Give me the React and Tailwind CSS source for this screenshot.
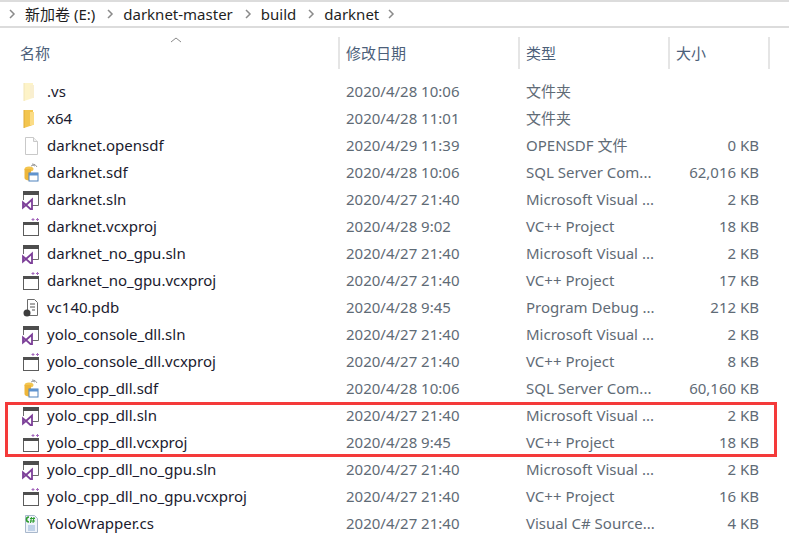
const files = [
  ['.vs', '2020/4/28 10:06', '文件夹', '', 'folderLight'],
  ['x64', '2020/4/28 11:01', '文件夹', '', 'folder'],
  ['darknet.opensdf', '2020/4/29 11:39', 'OPENSDF 文件', '0 KB', 'blank'],
  ['darknet.sdf', '2020/4/28 10:06', 'SQL Server Com...', '62,016 KB', 'sdf'],
  ['darknet.sln', '2020/4/27 21:40', 'Microsoft Visual ...', '2 KB', 'sln'],
  ['darknet.vcxproj', '2020/4/28 9:02', 'VC++ Project', '18 KB', 'proj'],
  ['darknet_no_gpu.sln', '2020/4/27 21:40', 'Microsoft Visual ...', '2 KB', 'sln'],
  ['darknet_no_gpu.vcxproj', '2020/4/27 21:40', 'VC++ Project', '17 KB', 'proj'],
  ['vc140.pdb', '2020/4/28 9:45', 'Program Debug ...', '212 KB', 'pdb'],
  ['yolo_console_dll.sln', '2020/4/27 21:40', 'Microsoft Visual ...', '2 KB', 'sln'],
  ['yolo_console_dll.vcxproj', '2020/4/27 21:40', 'VC++ Project', '8 KB', 'proj'],
  ['yolo_cpp_dll.sdf', '2020/4/28 10:06', 'SQL Server Com...', '60,160 KB', 'sdf'],
]
const marked = [
  ['yolo_cpp_dll.sln', '2020/4/27 21:40', 'Microsoft Visual ...', '2 KB', 'sln'],
  ['yolo_cpp_dll.vcxproj', '2020/4/28 9:45', 'VC++ Project', '18 KB', 'proj'],
]
const rest = [
  ['yolo_cpp_dll_no_gpu.sln', '2020/4/27 21:40', 'Microsoft Visual ...', '2 KB', 'sln'],
  ['yolo_cpp_dll_no_gpu.vcxproj', '2020/4/27 21:40', 'VC++ Project', '16 KB', 'proj'],
  ['YoloWrapper.cs', '2020/4/27 21:40', 'Visual C# Source...', '4 KB', 'cs'],
]

function FileIcon({ type }) {
  if (type === 'folder' || type === 'folderLight') {
    const light = type === 'folderLight'
    return (
      <svg width="18" height="20" viewBox="0 0 18 20">
        <path d="M2 1h9v15l-9 3z" fill={light ? '#fdf3c8' : '#f3c54f'} />
        <path d="M8 3h4v13H8z" fill={light ? '#f9efd0' : '#fbdc85'} />
        <path d="M2 1v18" stroke={light ? '#f2e6b5' : '#e0ab35'} fill="none" />
      </svg>
    )
  }
  if (type === 'blank') {
    return (
      <svg width="18" height="20" viewBox="0 0 18 20">
        <path d="M3.5 1.5h8l4 4v13h-12z" fill="#fff" stroke="#c9c9c9" />
        <path d="M11.5 1.5v4h4" fill="#f2f2f2" stroke="#c9c9c9" />
      </svg>
    )
  }
  if (type === 'sdf') {
    return (
      <svg width="18" height="20" viewBox="0 0 18 20">
        <path d="M9 3a3 3 0 0 1 4 0M10 1a5 5 0 0 1 5 3" stroke="#9a9a9a" fill="none" />
        <ellipse cx="7" cy="6" rx="4.5" ry="2.5" fill="#f3c54f" />
        <path d="M2.5 6v9c0 1.5 2 2.500 4.500 2.500h2V6z" fill="#eeb63a" />
        <rect x="7" y="10" width="9" height="8" fill="#fff" stroke="#4f82bd" />
        <path d="M7 10h9v2.500H7z" fill="#5f93cf" />
      </svg>
    )
  }
  if (type === 'sln') {
    return (
      <svg width="18" height="20" viewBox="0 0 18 20">
        <rect x="1" y="1" width="16" height="4" fill="#4d4d4d" />
        <path d="M1.500 5v5M16.500 5v10.500H10" stroke="#6b6b6b" fill="none" />
        <path d="M1 12.500l3 2.500-3 2.500zM4 15l6-5.500v11z" fill="none" stroke="#7c3f98" strokeWidth="1.800" />
      </svg>
    )
  }
  if (type === 'proj') {
    return (
      <svg width="18" height="20" viewBox="0 0 18 20">
        <rect x="1.500" y="5.500" width="15" height="13" fill="#fff" stroke="#5c5c5c" />
        <rect x="1" y="5" width="16" height="3" fill="#4f4f4f" />
        <path d="M9.500 2.500h3M11 1v3M14 2.500h3M15.500 1v3" stroke="#a569bd" />
      </svg>
    )
  }
  if (type === 'pdb') {
    return (
      <svg width="18" height="20" viewBox="0 0 18 20">
        <path d="M5.500 1.500h7l3 3v13h-10z" fill="#fff" stroke="#6c6c6c" />
        <path d="M8 6h5M8 9h5M10 12h3" stroke="#555" />
        <circle cx="5" cy="15" r="3.500" fill="#3d3d3d" />
      </svg>
    )
  }
  return (
    <svg width="18" height="20" viewBox="0 0 18 20">
      <path d="M3.500 1.500h9l3 3v14h-12z" fill="#eef3fa" stroke="#a9b8cc" />
      <path d="M6 12h7M6 14h7M6 16h7" stroke="#8fb0d6" />
      <path d="M7 3a2.500 2.500 0 1 0 0 5" stroke="#2f9e2f" strokeWidth="1.600" fill="none" />
      <path d="M9.500 3l-1 6M12 3l-1 6M8 4.500h5M8 7h5" stroke="#2f9e2f" />
    </svg>
  )
}

function Row({ file }) {
  const [name, date, kind, size, icon] = file
  return (
    <div className="flex h-[27px] items-center">
      <div className="flex w-[47px] shrink-0 justify-start pl-[22px]">
        <FileIcon type={icon} />
      </div>
      <div className="w-[299px] shrink-0 whitespace-nowrap text-[#1a1a2e]">{name}</div>
      <div className="w-[180px] shrink-0 whitespace-nowrap text-[#5f6b76]">{date}</div>
      <div className="w-[150px] shrink-0 whitespace-nowrap text-[#5f6b76]">{kind}</div>
      <div className="w-[83px] shrink-0 whitespace-nowrap text-right text-[#5f6b76]">{size}</div>
    </div>
  )
}

function Chevron() {
  return (
    <svg width="7" height="10" viewBox="0 0 7 10" className="shrink-0">
      <path d="M1 1l4 4-4 4" stroke="#8a8a8a" strokeWidth="1.500" fill="none" />
    </svg>
  )
}

function HeaderCell({ width, label }) {
  return (
    <div className={`flex h-[32px] shrink-0 items-center border-l-2 border-[#e5e5e5] pl-[6px] ${width}`}>{label}</div>
  )
}

export default function App() {
  return (
    <div className="relative h-[546px] w-[789px] overflow-hidden bg-white text-[15px] font-['Noto_Sans','Noto_Sans_CJK_SC',sans-serif]">
      <div className="flex h-[28px] items-center border-y-2 border-[#dcdcdc] pl-[9px] text-[#1f1f1f]">
        <Chevron />
        <span className="ml-[9px]">新加卷 (E:)</span>
        <span className="ml-[12px]"><Chevron /></span>
        <span className="ml-[9px]">darknet-master</span>
        <span className="ml-[12px]"><Chevron /></span>
        <span className="ml-[9px]">build</span>
        <span className="ml-[12px]"><Chevron /></span>
        <span className="ml-[9px]">darknet</span>
        <span className="ml-[9px]"><Chevron /></span>
      </div>
      <div className="relative mt-[9px] flex text-[#4c607a]">
        <svg width="12" height="6" viewBox="0 0 12 6" className="absolute left-[170px] top-0">
          <path d="M1 5l5-4 5 4" stroke="#8a8a8a" fill="none" />
        </svg>
        <div className="flex h-[32px] w-[338px] shrink-0 items-center pl-[20px]">名称</div>
        <HeaderCell width="w-[180px]" label="修改日期" />
        <HeaderCell width="w-[150px]" label="类型" />
        <HeaderCell width="w-[100px]" label="大小" />
        <div className="h-[32px] border-l-2 border-[#e5e5e5]" />
      </div>
      <div className="mt-[9px]">
        {files.map((f) => <Row key={f[0]} file={f} />)}
        <div className="relative">
          {marked.map((f) => <Row key={f[0]} file={f} />)}
          <div className="absolute left-[5px] top-0 h-[55px] w-[772px] border-[3px] border-[#f43a3a]" />
        </div>
        {rest.map((f) => <Row key={f[0]} file={f} />)}
      </div>
    </div>
  )
}
